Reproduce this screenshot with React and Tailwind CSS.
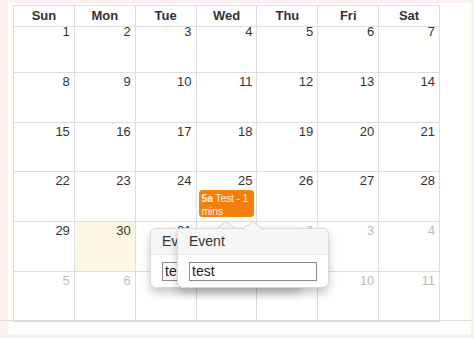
import React from "react";

const DAYS = ["Sun", "Mon", "Tue", "Wed", "Thu", "Fri", "Sat"];

const WEEKS = [
  [1, 2, 3, 4, 5, 6, 7],
  [8, 9, 10, 11, 12, 13, 14],
  [15, 16, 17, 18, 19, 20, 21],
  [22, 23, 24, 25, 26, 27, 28],
  [29, 30, 31, 1, 2, 3, 4],
  [5, 6, 7, 8, 9, 10, 11],
];

function Popover({ left }) {
  return (
    <div
      className="absolute top-[225px] w-[152px] h-[60px] bg-white rounded-[6px] border border-black/15 shadow-[0_5px_10px_rgba(0,0,0,0.22)]"
      style={{ left }}
    >
      <svg className="absolute -top-[8px] left-[64px]" width="22" height="9" viewBox="0 0 22 9">
        <path d="M0 9 L11 0.5 L22 9" fill="#f7f7f7" stroke="#cfcfcf" strokeWidth="1" />
      </svg>
      <div className="h-[26px] bg-[#f7f7f7] border-b border-[#ebebeb] rounded-t-[6px] px-[11px] flex items-center text-[14px] text-[#333]">
        Event
      </div>
      <div className="px-[11px] pt-[7px]">
        <div className="w-[128px] h-[19px] border border-[#8a8a8a] flex items-center px-[2px] text-[14px] text-[#222]">
          test
        </div>
      </div>
    </div>
  );
}

export default function App() {
  return (
    <div
      className="w-[474px] h-[338px] bg-[#fcf1ee] pt-[3px] pl-[8px] pr-[3px] overflow-hidden"
      style={{ fontFamily: '"Liberation Sans", Arial, sans-serif' }}
    >
      <div className="relative h-[331px] bg-white pt-[2px] pl-[5px]">
        <div className="w-[427px] border-l border-t border-[#dddddd]">
          <div className="grid grid-cols-7 h-[17px]">
            {DAYS.map((d) => (
              <div
                key={d}
                className="border-r border-b border-[#dddddd] flex items-center justify-center text-[13px] font-bold text-[#333]"
              >
                {d}
              </div>
            ))}
          </div>
          {WEEKS.map((week, wi) => (
            <div key={wi} className="grid grid-cols-7 h-[49.8px]">
              {week.map((n, di) => {
                const other = (wi === 4 && di >= 3) || wi === 5;
                const today = wi === 4 && di === 1;
                return (
                  <div
                    key={di}
                    className={
                      "border-r border-b border-[#dddddd] pt-[1px] " +
                      (today ? "bg-[#fcf8e3]" : "")
                    }
                  >
                    <div
                      className={
                        "text-right pr-[4px] text-[13px] leading-[16px] " +
                        (other ? "text-[#bbbbbb]" : "text-[#333]")
                      }
                    >
                      {n}
                    </div>
                    {wi === 3 && di === 3 && (
                      <div className="mx-[2px] mt-[1px] h-[27px] bg-[#f57f0c] rounded-[3px] px-[2px] pt-[1px] text-[10.5px] leading-[13px] tracking-[-0.2px] text-[#fff1e0] border border-[#f0870f]">
                        <span className="font-bold">5a</span> Test - 1 mins
                      </div>
                    )}
                  </div>
                );
              })}
            </div>
          ))}
        </div>
        <div className="absolute left-[-8px] right-0 top-[317px] border-t border-[#dedede]" />
        <Popover left={142} />
        <Popover left={169} />
      </div>
    </div>
  );
}
